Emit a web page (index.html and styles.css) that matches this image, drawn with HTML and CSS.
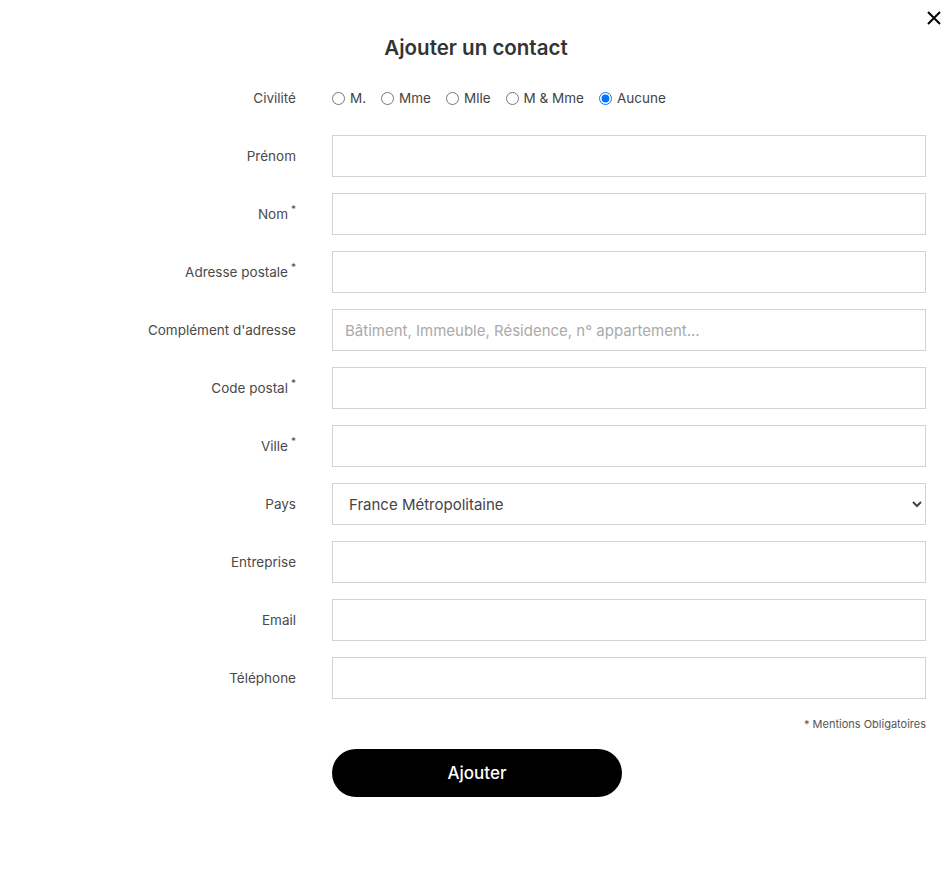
FILE: index.html
```html
<!DOCTYPE html>
<html lang="fr">
  <head>
    <meta charset="UTF-8" />
    <meta name="viewport" content="width=device-width, initial-scale=1.0" />
    <title>Ajouter un contact</title>
    <link rel="stylesheet" href="styles.css">
  </head>
  <body>
    <div class="modal">
      <button class="modal__close" aria-label="Fermer">
        <svg width="16" height="16" viewBox="0 0 16 16">
          <path d="M2 2 L14 14 M14 2 L2 14" stroke="#000" stroke-width="2" fill="none" />
        </svg>
      </button>
      <h2 class="modal__title">Ajouter un contact</h2>

      <form class="form">
        <div class="form__row form__row--radio">
          <label class="form__label">Civilité</label>
          <div class="radios">
            <label class="radio"><input type="radio" name="civ" /> M.</label>
            <label class="radio"><input type="radio" name="civ" /> Mme</label>
            <label class="radio"><input type="radio" name="civ" /> Mlle</label>
            <label class="radio"><input type="radio" name="civ" /> M &amp; Mme</label>
            <label class="radio"><input type="radio" name="civ" checked /> Aucune</label>
          </div>
        </div>

        <div class="form__row">
          <label class="form__label">Prénom</label>
          <input class="form__input" type="text" />
        </div>
        <div class="form__row">
          <label class="form__label">Nom<sup>*</sup></label>
          <input class="form__input" type="text" />
        </div>
        <div class="form__row">
          <label class="form__label">Adresse postale<sup>*</sup></label>
          <input class="form__input" type="text" />
        </div>
        <div class="form__row">
          <label class="form__label">Complément d'adresse</label>
          <input class="form__input" type="text" placeholder="Bâtiment, Immeuble, Résidence, n° appartement..." />
        </div>
        <div class="form__row">
          <label class="form__label">Code postal<sup>*</sup></label>
          <input class="form__input" type="text" />
        </div>
        <div class="form__row">
          <label class="form__label">Ville<sup>*</sup></label>
          <input class="form__input" type="text" />
        </div>
        <div class="form__row">
          <label class="form__label">Pays</label>
          <select class="form__input form__select">
            <option>France Métropolitaine</option>
          </select>
        </div>
        <div class="form__row">
          <label class="form__label">Entreprise</label>
          <input class="form__input" type="text" />
        </div>
        <div class="form__row">
          <label class="form__label">Email</label>
          <input class="form__input" type="email" />
        </div>
        <div class="form__row">
          <label class="form__label">Téléphone</label>
          <input class="form__input" type="tel" />
        </div>

        <div class="form__row form__row--foot">
          <span></span>
          <div class="form__foot">
            <p class="form__note">* Mentions Obligatoires</p>
            <button class="form__submit" type="button">Ajouter</button>
          </div>
        </div>
      </form>
    </div>
  </body>
</html>
```

FILE: styles.css
```css
* {
  margin: 0;
  padding: 0;
  box-sizing: border-box;
}

body {
  background: #fff;
  font-family: "Inter", "Liberation Sans", sans-serif;
  color: #444;
}

.modal {
  position: relative;
  width: 952px;
  padding-top: 35px;
}

.modal__close {
  position: absolute;
  top: 10px;
  right: 10px;
  border: 0;
  background: none;
  width: 16px;
  height: 16px;
  cursor: pointer;
}

.modal__title {
  text-align: center;
  font-size: 20.5px;
  font-weight: 600;
  color: #333;
  line-height: 25px;
}

.form {
  margin-top: 25px;
  display: flex;
  flex-direction: column;
  gap: 16px;
}

.form__row {
  display: grid;
  grid-template-columns: 296px 594px;
  column-gap: 36px;
  align-items: center;
}

.form__row--radio {
  height: 26px;
  margin-bottom: 8px;
}

.form__label {
  text-align: right;
  font-size: 13.5px;
  font-weight: 400;
  color: #4a4a4a;
  line-height: 18px;
}

.form__label sup {
  font-size: 10px;
  line-height: 0;
  margin-left: 3px;
  vertical-align: 0;
  position: relative;
  top: -6px;
}

.radios {
  display: flex;
  gap: 15px;
  font-size: 13.5px;
}

.radio {
  display: flex;
  align-items: center;
  gap: 5px;
}

.radio input {
  width: 13px;
  height: 13px;
  margin: 0;
}

.form__input {
  height: 42px;
  width: 100%;
  border: 1px solid #d2d2d2;
  border-radius: 0;
  padding: 0 12px;
  font-family: inherit;
  font-size: 15px;
  color: #444;
  background: #fff;
}

.form__input::placeholder {
  color: #aaa;
}

.form__select {
  padding-left: 12px;
}

.form__row--foot {
  align-items: start;
  margin-top: 2px;
}

.form__foot {
  display: flex;
  flex-direction: column;
}

.form__note {
  text-align: right;
  font-size: 11px;
  color: #555;
}

.form__submit {
  margin-top: 18px;
  width: 290px;
  height: 48px;
  border: 0;
  border-radius: 24px;
  background: #000;
  color: #fff;
  font-family: inherit;
  font-size: 17px;
  font-weight: 500;
  cursor: pointer;
}
```
